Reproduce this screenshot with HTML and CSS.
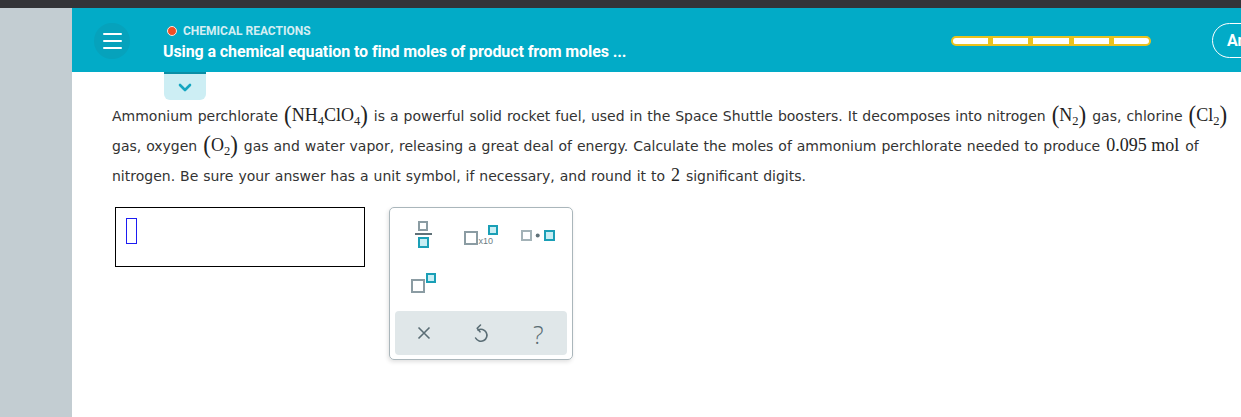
FILE: index.html
```html
<!DOCTYPE html>
<html lang="en">
<head>
<meta charset="utf-8">
<title>Chemical Reactions</title>
<link rel="stylesheet" href="styles.css">
</head>
<body>
<div class="topbar"></div>
<div class="shell">
  <aside class="sidebar"></aside>
  <main class="main">
    <header class="header">
      <button class="menu-btn" aria-label="Menu">
        <span></span><span></span><span></span>
      </button>
      <div class="heading">
        <div class="kicker"><span class="dot"></span>CHEMICAL REACTIONS</div>
        <div class="title">Using a chemical equation to find moles of product from moles ...</div>
      </div>
      <div class="progress">
        <span></span><span></span><span></span><span></span><span></span>
      </div>
      <div class="account"><button class="account-btn">Answer</button></div>
    </header>
    <div class="tab">
      <svg width="14" height="9" viewBox="0 0 14 9"><path d="M2 2 L7 7 L12 2" fill="none" stroke="#16a6c1" stroke-width="2.6" stroke-linecap="round" stroke-linejoin="round"/></svg>
    </div>
    <p class="question">Ammonium perchlorate <span class="math"><span class="paren">(</span>NH<sub>4</sub>ClO<sub>4</sub><span class="paren">)</span></span> is a powerful solid rocket fuel, used in the Space Shuttle boosters. It decomposes into nitrogen <span class="math"><span class="paren">(</span>N<sub>2</sub><span class="paren">)</span></span> gas, chlorine <span class="math"><span class="paren">(</span>Cl<sub>2</sub><span class="paren">)</span></span> gas, oxygen <span class="math"><span class="paren">(</span>O<sub>2</sub><span class="paren">)</span></span> gas and water vapor, releasing a great deal of energy. Calculate the moles of ammonium perchlorate needed to produce <span class="math">0.095 mol</span> of nitrogen. Be sure your answer has a unit symbol, if necessary, and round it to <span class="math">2</span> significant digits.</p>
    <div class="answer-row">
      <div class="answer-box"><span class="caret"></span></div>
      <div class="palette">
        <div class="keys">
          <button class="key" aria-label="fraction">
            <svg width="18" height="28" viewBox="0 0 18 28"><rect x="4" y="1" width="8" height="8" fill="#fff" stroke="#8b9ca3" stroke-width="2"/><line x1="0" y1="13" x2="17" y2="13" stroke="#5f7178" stroke-width="2"/><rect x="4" y="17" width="9" height="9" fill="#c8eef4" stroke="#1a9fb6" stroke-width="2"/></svg>
          </button>
          <button class="key" aria-label="scientific notation">
            <svg width="34" height="20" viewBox="0 0 34 20"><rect x="1" y="7" width="12" height="12" fill="#fff" stroke="#8b9ca3" stroke-width="2"/><text x="14.5" y="18.5" font-family="Liberation Sans, sans-serif" font-size="9" fill="#6b7c83">x10</text><rect x="25" y="1" width="8" height="8" fill="#c8eef4" stroke="#1a9fb6" stroke-width="2"/></svg>
          </button>
          <button class="key" aria-label="multiply">
            <svg width="34" height="11" viewBox="0 0 34 11"><rect x="1" y="1" width="9" height="9" fill="#fff" stroke="#a3b2b7" stroke-width="2"/><circle cx="16.7" cy="5.5" r="2" fill="#5f7178"/><rect x="24" y="1" width="9" height="9" fill="#c8eef4" stroke="#1a9fb6" stroke-width="2"/></svg>
          </button>
          <button class="key" aria-label="superscript">
            <svg width="25" height="20" viewBox="0 0 25 20"><rect x="1" y="7" width="12" height="12" fill="#fff" stroke="#8b9ca3" stroke-width="2"/><rect x="16" y="1" width="8" height="8" fill="#c8eef4" stroke="#1a9fb6" stroke-width="2"/></svg>
          </button>
        </div>
        <div class="actions">
          <button class="action" aria-label="clear">
            <svg width="14" height="14" viewBox="0 0 14 14"><path d="M1.5 1.5 L12.5 12.5 M12.5 1.5 L1.5 12.5" stroke="#5a6d75" stroke-width="1.6" fill="none"/></svg>
          </button>
          <button class="action" aria-label="undo">
            <svg width="16" height="20" viewBox="0 0 16 20"><path d="M5 7 A6 6 0 1 1 2.6 15" fill="none" stroke="#5a6d75" stroke-width="1.6" stroke-linecap="round"/><path d="M7.5 2 L4.2 5.2 L7 8.8" fill="none" stroke="#5a6d75" stroke-width="1.6" stroke-linecap="round" stroke-linejoin="round"/></svg>
          </button>
          <button class="action help" aria-label="help">?</button>
        </div>
      </div>
    </div>
  </main>
</div>
</body>
</html>
```
FILE: styles.css
```css
html, body {
  margin: 0;
  padding: 0;
}
body {
  width: 1241px;
  height: 417px;
  overflow: hidden;
  background: #ffffff;
  font-family: "DejaVu Sans", Verdana, sans-serif;
}
button {
  font: inherit;
  border: none;
  background: none;
  padding: 0;
  margin: 0;
  cursor: pointer;
}
.topbar {
  height: 8px;
  background: #333438;
}
.shell {
  display: flex;
  height: 409px;
}
.sidebar {
  width: 72px;
  flex: none;
  background: #c3cdd2;
}
.main {
  flex: 1;
  min-width: 0;
  overflow: hidden;
  background: #ffffff;
}
.header {
  height: 64px;
  background: #02abc7;
  display: flex;
  align-items: center;
  padding-left: 22px;
}
.menu-btn {
  flex: none;
  width: 36px;
  height: 36px;
  border-radius: 50%;
  background: #06a2bc;
  display: flex;
  flex-direction: column;
  align-items: center;
  justify-content: center;
  gap: 5px;
  margin-top: 2px;
}
.menu-btn span {
  display: block;
  width: 19px;
  height: 2px;
  background: #ffffff;
  border-radius: 1px;
}
.heading {
  flex: none;
  margin-left: 33px;
  margin-top: 6px;
  display: flex;
  flex-direction: column;
  gap: 2px;
  font-family: Roboto, "Liberation Sans", sans-serif;
}
.kicker {
  display: flex;
  align-items: center;
  gap: 6px;
  padding-left: 4px;
  height: 16px;
  font-size: 12px;
  font-weight: 700;
  color: #d4eef3;
}
.dot {
  width: 10px;
  height: 10px;
  box-sizing: border-box;
  border-radius: 50%;
  background: #ef4f25;
  border: 1px solid #ffe5dc;
}
.title {
  height: 22px;
  line-height: 22px;
  font-size: 16px;
  font-weight: 700;
  color: #ffffff;
  letter-spacing: -0.1px;
}
.progress {
  flex: none;
  margin-left: auto;
  margin-right: 61px;
  width: 200px;
  height: 10px;
  box-sizing: border-box;
  padding: 2px;
  border-radius: 5px;
  background: #e9c21d;
  display: flex;
  gap: 5px;
  margin-top: 2px;
}
.progress span {
  flex: 1;
  background: #ffffff;
}
.progress span:first-child {
  border-radius: 3px 0 0 3px;
}
.progress span:last-child {
  border-radius: 0 3px 3px 0;
}
.account {
  flex: none;
  width: 29px;
  overflow: visible;
  display: flex;
}
.account-btn {
  flex: none;
  height: 35px;
  box-sizing: border-box;
  border: 1.5px solid #ffffff;
  border-radius: 18px;
  padding: 0 16px 0 14px;
  color: #ffffff;
  font-family: Roboto, "Liberation Sans", sans-serif;
  font-size: 16px;
  font-weight: 700;
  margin-top: 1px;
}
.tab {
  margin-left: 92px;
  width: 42px;
  height: 26px;
  border-top: 2px solid #0b8ea5;
  background: #cdeef4;
  border-radius: 0 0 6px 6px;
  display: flex;
  align-items: center;
  justify-content: center;
}
.tab svg {
  display: block;
  margin-top: 1px;
}
.question {
  margin: 1px 0 0 40px;
  width: 1128px;
  font-size: 14px;
  word-spacing: 0.5px;
  line-height: 30px;
  color: #333333;
}
.math {
  font-family: "Liberation Serif", "Times New Roman", serif;
  font-size: 18px;
  line-height: 1;
  word-spacing: 0;
  color: #222222;
  white-space: nowrap;
  margin: 0 1px;
}
.math sub {
  font-size: 12.5px;
  vertical-align: -4px;
  line-height: 0;
}
.paren {
  font-size: 23px;
  line-height: 0;
  display: inline-block;
  transform: scaleY(1.1);
  vertical-align: -1px;
}
.answer-row {
  display: flex;
  align-items: flex-start;
  gap: 24px;
  margin-top: 16px;
  padding-left: 43px;
}
.answer-box {
  width: 250px;
  height: 60px;
  box-sizing: border-box;
  border: 1px solid #000000;
  padding: 10px;
}
.caret {
  display: block;
  width: 11px;
  height: 26px;
  box-sizing: border-box;
  border: 1px solid #1d1df2;
}
.palette {
  width: 184px;
  height: 153px;
  box-sizing: border-box;
  border: 1px solid #aab6bb;
  border-radius: 5px;
  padding: 3px 5px 4px;
  box-shadow: -1px 2px 4px rgba(0, 0, 0, 0.12);
  display: flex;
  flex-direction: column;
}
.keys {
  display: grid;
  grid-template-columns: repeat(3, 1fr);
  grid-template-rows: 48px 48px;
}
.key {
  display: flex;
  align-items: center;
  justify-content: center;
}
.key svg {
  display: block;
}
.actions {
  margin-top: 4px;
  height: 44px;
  border-radius: 4px;
  background: #e0e7e9;
  display: grid;
  grid-template-columns: repeat(3, 1fr);
}
.action {
  display: flex;
  align-items: center;
  justify-content: center;
}
.action svg {
  display: block;
}
.help {
  font-family: "Open Sans", "DejaVu Sans", sans-serif;
  font-weight: 300;
  font-size: 25px;
  line-height: 1;
  color: #5a6d75;
  padding-top: 2px;
}
```
